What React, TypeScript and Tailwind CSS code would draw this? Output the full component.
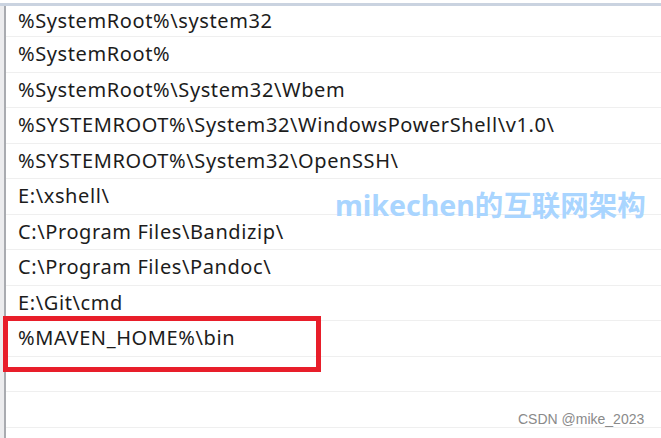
const paths = [
  '%SystemRoot%\\system32',
  '%SystemRoot%',
  '%SystemRoot%\\System32\\Wbem',
  '%SYSTEMROOT%\\System32\\WindowsPowerShell\\v1.0\\',
  '%SYSTEMROOT%\\System32\\OpenSSH\\',
  'E:\\xshell\\',
  'C:\\Program Files\\Bandizip\\',
  'C:\\Program Files\\Pandoc\\',
  'E:\\Git\\cmd',
  '%MAVEN_HOME%\\bin',
  '',
  '',
]

export default function App() {
  return (
    <div className="relative flex h-[438px] w-[661px] flex-col overflow-hidden bg-white font-['Noto_Sans',sans-serif] text-[#1c1c1c]">
      <div className="h-[3px] bg-white" />
      <div className="h-[3px] bg-[#cad3e0]" />
      <div className="flex flex-1">
        <div className="w-[4px] bg-[#ececee]" />
        <div className="w-[2px] bg-[#a9abb0]" />
        <div className="flex-1">
          {paths.map((p, i) => (
            <div
              key={i}
              className={
                'flex items-center border-b border-[#efefef] pl-[12px] text-[20px] leading-none tracking-[0.6px] ' +
                (i === 0 ? 'h-[31px]' : 'h-[35.5px]')
              }
            >
              {p}
            </div>
          ))}
        </div>
      </div>

      {/* red highlight */}
      <div className="absolute left-[3px] top-[316px] h-[56px] w-[318px] border-[5px] border-[#e81e2a]" />

      <div className="absolute left-[335px] top-[184px] font-['Noto_Sans','Noto_Sans_CJK_SC',sans-serif] text-[28.5px] font-bold text-[#a9d5ff]">
        mikechen的互联网架构
      </div>

      <div className="absolute left-[518px] top-[409px] font-['Liberation_Sans',sans-serif] text-[14px] text-[#8a8a8a]">
        CSDN @mike_2023
      </div>
    </div>
  )
}
